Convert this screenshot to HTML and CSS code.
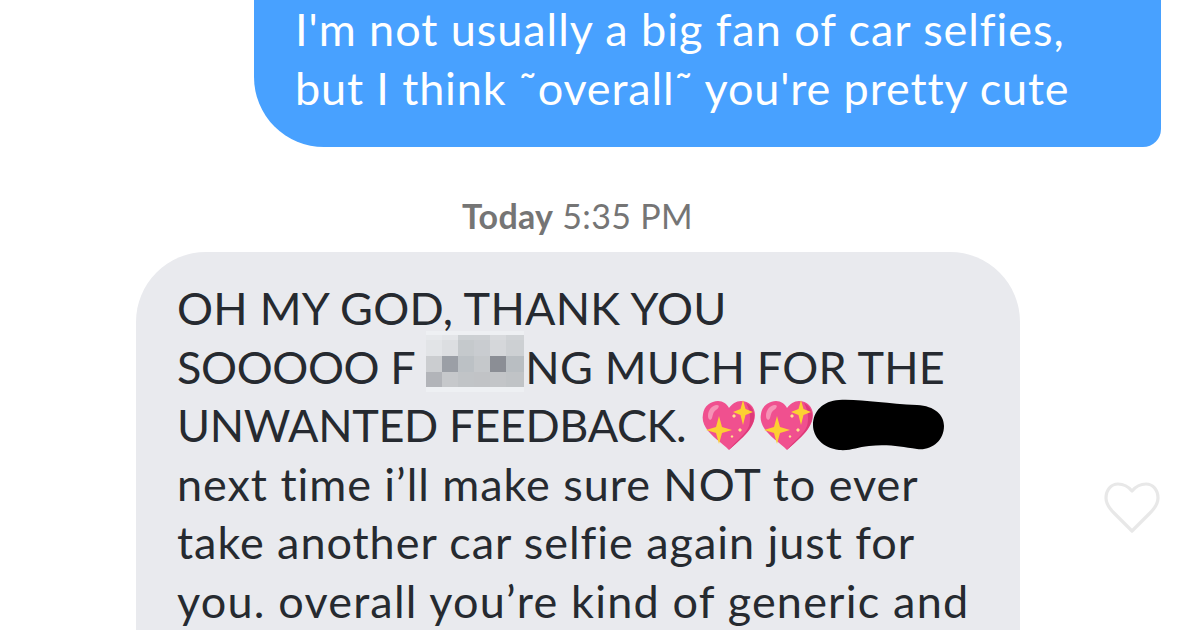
FILE: index.html
```html
<!DOCTYPE html>
<html lang="en">
<head>
    <meta charset="UTF-8">
    <meta name="viewport" content="width=device-width, initial-scale=1.0">
    <title>Messages</title>
    <link rel="stylesheet" href="styles.css">
</head>
<body>

    <div class="chat">
        <!-- Sent message -->
        <div class="row-sent">
            <div class="bubble-sent">
                <span class="wide">I'm not usually a big fan of car selfies,</span><br>
                <span class="semi-wide">but I think ˜overall˜ you're pretty cute</span>
            </div>
        </div>

        <div class="timestamp"><strong>Today</strong> 5:35 PM</div>

        <!-- Received message -->
        <div class="row-received">
            <div class="bubble-received">
                <span class="tight">OH MY GOD, THANK YOU</span><br>
                <span class="mid">SOOOOO F</span><span class="censor"><svg class="mosaic" width="98" height="61" viewBox="0 0 98 61" shape-rendering="crispEdges">
                    <rect width="98" height="61" fill="#eef0f3"/>
                    <rect x="0" y="4" width="16" height="9" fill="#e6e8eb"/><rect x="16" y="4" width="16" height="9" fill="#e3e5e8"/><rect x="32" y="4" width="16" height="9" fill="#ccd0d3"/><rect x="48" y="4" width="16" height="9" fill="#cdd0d3"/><rect x="64" y="4" width="16" height="9" fill="#d8dadd"/><rect x="80" y="4" width="18" height="9" fill="#d0d3d6"/>
                    <rect x="0" y="9" width="16" height="16" fill="#e2e4e7"/><rect x="16" y="9" width="16" height="16" fill="#dcdee1"/><rect x="32" y="9" width="16" height="16" fill="#c5c9cc"/><rect x="48" y="9" width="16" height="16" fill="#c9ccd0"/><rect x="64" y="9" width="16" height="16" fill="#d5d7da"/><rect x="80" y="9" width="18" height="16" fill="#cdd0d3"/>
                    <rect x="0" y="25" width="16" height="16" fill="#cbcdd0"/><rect x="16" y="25" width="16" height="16" fill="#9b9fa6"/><rect x="32" y="25" width="16" height="16" fill="#bcc1c5"/><rect x="48" y="25" width="16" height="16" fill="#c5c8cb"/><rect x="64" y="25" width="16" height="16" fill="#8b8e95"/><rect x="80" y="25" width="18" height="16" fill="#b9bec2"/>
                    <rect x="0" y="41" width="16" height="15" fill="#b2b4b9"/><rect x="16" y="41" width="16" height="15" fill="#c6c8cb"/><rect x="32" y="41" width="16" height="15" fill="#c1c4c7"/><rect x="48" y="41" width="16" height="15" fill="#c1c3c6"/><rect x="64" y="41" width="16" height="15" fill="#c3c5c8"/><rect x="80" y="41" width="18" height="15" fill="#c0c3c6"/>
                </svg></span><span class="tight">NG MUCH FOR THE</span><br>
                <span class="tighter">UNWANTED FEEDBACK.</span>
                <span class="emoji-group">
                    <svg class="heart-emoji" viewBox="0 0 54 50"><use href="#sparkle-heart"/></svg><svg class="heart-emoji" viewBox="0 0 54 50"><use href="#sparkle-heart"/></svg><svg class="scribble" viewBox="0 0 131 52"><path d="M26 1C50 0 72 5 104 6C122 7 131 16 131 27C131 42 118 52 104 50C88 48 76 45 56 47C44 48 38 52 26 51C10 49 0 38 0 26C0 12 10 2 26 1Z" fill="#000"/></svg>
                </span><br>
                <span class="wide">next time i’ll make sure NOT to ever</span><br>
                <span class="wide">take another car selfie again just for</span><br>
                <span class="widest">you. overall you’re kind of generic and</span>
            </div>
            <svg class="like" width="56" height="52" viewBox="0 0 56 52"><path d="M28 9C23 3 18 2 14 2C7 2 2 8 2 16C2 22 5 26 10 31L28 49L46 31C51 26 54 22 54 16C54 8 49 2 42 2C38 2 33 3 28 9Z" fill="none" stroke="#e8e8e8" stroke-width="3.2" stroke-linejoin="round"/></svg>
        </div>
    </div>

    <svg class="defs" width="0" height="0">
        <defs>
            <g id="sparkle-heart">
                <path d="M27 50C20 43 9 36 4 28C1 23 0 19 1 14C2 6 9 1 16 1C21 1 25 4 27 8C30 4 34 1 39 1C47 1 53 7 53 15C53 20 51 24 48 29C43 36 34 43 27 50Z" fill="#f0508f"/>
                <path d="M44 3C50 6 53 12 52 19C51 25 47 31 41 37C36 42 31 46 27 50C34 40 43 36 47 26C49 19 48 10 44 3Z" fill="#de3a78"/>
                <path d="M6 16C6 10 10 5 15 5C18 5 17 8 14 10C11 12 11 15 10 18C9 21 6 20 6 16Z" fill="#f692b6"/>
                <path d="M41 0L43.500 9L51 12L43.500 15L41 25L38.500 15L31 12L38.500 9Z" fill="#fdd032"/>
                <path d="M17 16L20 27L30 30L20 33L17 44L14 33L4 30L14 27Z" fill="#fdd032"/>
                <path d="M32 14L34 16L32 18L30 16Z M38 28L40 30L38 32L36 30Z M30 35L31.500 36.500L30 38L28.500 36.500Z" fill="#ffe28a"/>
            </g>
        </defs>
    </svg>

</body>
</html>
```

FILE: styles.css
```css
body {
    font-family: Lato, "Open Sans", sans-serif;
    font-variant-ligatures: none;
    background-color: #fff;
    margin: 0;
    height: 630px;
    overflow: hidden;
}
.chat {
    display: flex;
    flex-direction: column;
}
.row-sent {
    display: flex;
    justify-content: flex-end;
    padding-right: 39px;
    margin-top: -60px;
}
.bubble-sent {
    width: 907px;
    box-sizing: border-box;
    padding: 60px 40px 30px 41px;
    background-color: #48a1ff;
    color: #fff;
    font-size: 45px;
    line-height: 58.500px;
    border-radius: 0 0 18px 70px;
    white-space: nowrap;
}
.timestamp {
    margin-top: 49px;
    padding-left: 462px;
    font-size: 34px;
    line-height: 40px;
    letter-spacing: 0.300px;
    color: #757575;
}
.timestamp strong {
    font-weight: 700;
}
.row-received {
    display: flex;
    align-items: flex-start;
    margin-top: 16px;
    padding-left: 136px;
}
.bubble-received {
    width: 884px;
    box-sizing: border-box;
    padding: 27px 40px 40px 41px;
    background-color: #e9eaee;
    color: #262a30;
    font-size: 45px;
    line-height: 58.500px;
    border-radius: 70px 70px 0 0;
    white-space: nowrap;
}
.widest {
    letter-spacing: 1.200px;
}
.wide {
    letter-spacing: 0.950px;
}
.semi-wide {
    letter-spacing: 0.850px;
}
.mid {
    letter-spacing: -0.400px;
}
.tight {
    letter-spacing: 0.250px;
}
.tighter {
    letter-spacing: -0.350px;
}
.like {
    margin: 230px 0 0 84px;
}
.censor {
    position: relative;
    display: inline-block;
    width: 98px;
    height: 1px;
    margin: 0 1px 0 11px;
}
.mosaic {
    position: absolute;
    left: 0;
    top: -52px;
}
.emoji-group {
    display: inline-flex;
    align-items: center;
    vertical-align: -8px;
    margin-left: 4px;
    height: 52px;
}
.heart-emoji {
    width: 54px;
    height: 50px;
    margin-right: 4px;
}
.scribble {
    width: 131px;
    height: 52px;
    margin-left: -5px;
}
.defs {
    position: absolute;
}
```
